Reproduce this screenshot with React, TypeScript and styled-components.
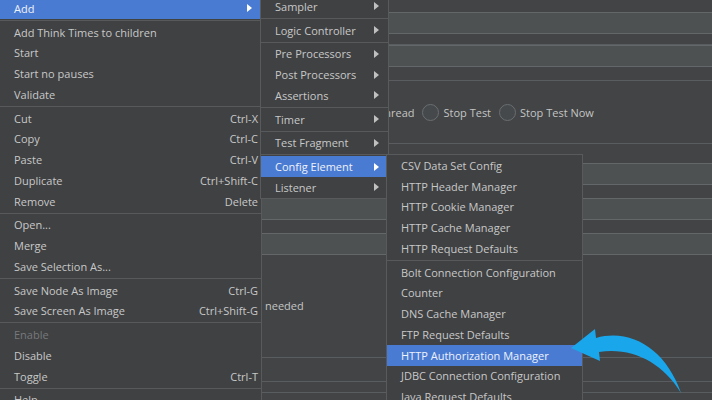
import React from 'react';
import styled, { createGlobalStyle } from 'styled-components';

type MenuEntry =
    | 'sep'
    | {
          label: string;
          shortcut?: string;
          sub?: boolean;
          active?: boolean;
          disabled?: boolean;
      };

const mainItems: MenuEntry[] = [
    { label: 'Add', sub: true, active: true },
    'sep',
    { label: 'Add Think Times to children' },
    { label: 'Start' },
    { label: 'Start no pauses' },
    { label: 'Validate' },
    'sep',
    { label: 'Cut', shortcut: 'Ctrl-X' },
    { label: 'Copy', shortcut: 'Ctrl-C' },
    { label: 'Paste', shortcut: 'Ctrl-V' },
    { label: 'Duplicate', shortcut: 'Ctrl+Shift-C' },
    { label: 'Remove', shortcut: 'Delete' },
    'sep',
    { label: 'Open...' },
    { label: 'Merge' },
    { label: 'Save Selection As...' },
    'sep',
    { label: 'Save Node As Image', shortcut: 'Ctrl-G' },
    { label: 'Save Screen As Image', shortcut: 'Ctrl+Shift-G' },
    'sep',
    { label: 'Enable', disabled: true },
    { label: 'Disable' },
    { label: 'Toggle', shortcut: 'Ctrl-T' },
    'sep',
    { label: 'Help' },
];

const addItems: MenuEntry[] = [
    { label: 'Sampler', sub: true },
    'sep',
    { label: 'Logic Controller', sub: true },
    'sep',
    { label: 'Pre Processors', sub: true },
    { label: 'Post Processors', sub: true },
    { label: 'Assertions', sub: true },
    'sep',
    { label: 'Timer', sub: true },
    'sep',
    { label: 'Test Fragment', sub: true },
    'sep',
    { label: 'Config Element', sub: true, active: true },
    { label: 'Listener', sub: true },
];

const configItems: MenuEntry[] = [
    { label: 'CSV Data Set Config' },
    { label: 'HTTP Header Manager' },
    { label: 'HTTP Cookie Manager' },
    { label: 'HTTP Cache Manager' },
    { label: 'HTTP Request Defaults' },
    'sep',
    { label: 'Bolt Connection Configuration' },
    { label: 'Counter' },
    { label: 'DNS Cache Manager' },
    { label: 'FTP Request Defaults' },
    { label: 'HTTP Authorization Manager', active: true },
    { label: 'JDBC Connection Configuration' },
    { label: 'Java Request Defaults' },
];

function Menu({
    items,
    top,
    left,
    width,
}: {
    items: MenuEntry[];
    top: number;
    left: number;
    width: number;
}) {
    return (
        <Popup $top={top} $left={left} $width={width}>
            {items.map((item, i) =>
                item === 'sep' ? (
                    <Separator key={i} />
                ) : (
                    <MenuRow
                        key={i}
                        $active={!!item.active}
                        $disabled={!!item.disabled}
                    >
                        <span>{item.label}</span>
                        {item.shortcut && <Shortcut>{item.shortcut}</Shortcut>}
                        {item.sub && <SubArrow $active={!!item.active} />}
                    </MenuRow>
                ),
            )}
        </Popup>
    );
}

export default function App() {
    return (
        <>
            <GlobalStyle />
            <Screen>
                <Backdrop>
                    <Band $h={12} />
                    <Field />
                    <Band $h={11} $line />
                    <Field />
                    <Band $h={14} $line />
                    <RadioRow>
                        <RadioItem>
                            <Radio />
                            Stop Thread
                        </RadioItem>
                        <RadioItem>
                            <Radio />
                            Stop Test
                        </RadioItem>
                        <RadioItem>
                            <Radio />
                            Stop Test Now
                        </RadioItem>
                    </RadioRow>
                    <Band $h={19} />
                    <Field />
                    <Band $h={13} />
                    <Field />
                    <Band $h={13} />
                    <Field />
                    <CheckRow>
                        <CheckLabel>needed</CheckLabel>
                    </CheckRow>
                    <Band $h={24} $line />
                    <Band $h={11} $line />
                    <Band $h={10} />
                </Backdrop>

                <Menu items={mainItems} top={-3} left={-1} width={263} />
                <Menu items={addItems} top={-5} left={260} width={129} />
                <Menu items={configItems} top={154} left={386} width={197} />

                <Pointer viewBox="0 0 712 400">
                    <path
                        d="M571 348 L595 329 L596 338 C632 328 666 350 681 393 C662 362 632 347 599 352 L600 361 Z"
                        fill="#1aa6ea"
                    />
                </Pointer>
            </Screen>
        </>
    );
}

const GlobalStyle = createGlobalStyle`
    body {
        margin: 0;
        background: #414345;
        font-family: 'Open Sans', 'Noto Sans', sans-serif;
    }
`;

const Screen = styled.div`
    position: relative;
    width: 712px;
    height: 400px;
    overflow: hidden;
    background: #424446;
    font-size: 11px;
    color: #c6c6c6;
`;

const Backdrop = styled.div`
    display: flex;
    flex-direction: column;
    width: 100%;
`;

const Band = styled.div<{ $h: number; $line?: boolean }>`
    height: ${({ $h }) => $h}px;
    border-bottom: ${({ $line }) => ($line ? '1px solid #5a5d5f' : 'none')};
    box-sizing: border-box;
`;

const Field = styled.div`
    height: 22px;
    box-sizing: border-box;
    background: #4d5152;
    border-top: 1px solid #63676a;
    border-bottom: 1px solid #63676a;
`;

const RadioRow = styled.div`
    height: 63px;
    display: flex;
    align-items: center;
    gap: 8px;
    padding-left: 331px;
    border-bottom: 1px solid #5a5d5f;
    box-sizing: border-box;
`;

const RadioItem = styled.label`
    display: flex;
    align-items: center;
    gap: 4px;
    font-size: 11px;
    color: #c4c4c4;
`;

const Radio = styled.span`
    width: 15px;
    height: 15px;
    border-radius: 50%;
    border: 1px solid #6b6e70;
    background: #46494b;
`;

const CheckRow = styled.div`
    height: 103px;
    display: flex;
    align-items: center;
    padding: 0 0 2px 265px;
    box-sizing: border-box;
    border-bottom: 1px solid #5a5d5f;
`;

const CheckLabel = styled.span`
    font-size: 11px;
    color: #c4c4c4;
`;

const Popup = styled.div<{ $top: number; $left: number; $width: number }>`
    position: absolute;
    top: ${({ $top }) => $top}px;
    left: ${({ $left }) => $left}px;
    width: ${({ $width }) => $width}px;
    box-sizing: border-box;
    background: #3f4143;
    border: 1px solid #585a5c;
    display: flex;
    flex-direction: column;
`;

const MenuRow = styled.div<{ $active: boolean; $disabled: boolean }>`
    height: 20.75px;
    display: flex;
    align-items: center;
    padding: 0 3px 0 14px;
    white-space: nowrap;
    font-size: 11px;
    background: ${({ $active }) => ($active ? '#4a7bd2' : 'transparent')};
    color: ${({ $active, $disabled }) =>
        $disabled ? '#77797b' : $active ? '#eef2fa' : '#c8c8c8'};
`;

const Shortcut = styled.span`
    margin-left: auto;
`;

const SubArrow = styled.span<{ $active: boolean }>`
    margin-left: auto;
    margin-right: 6px;
    width: 0;
    height: 0;
    border-top: 4px solid transparent;
    border-bottom: 4px solid transparent;
    border-left: 5px solid ${({ $active }) => ($active ? '#ffffff' : '#c0c0c0')};
`;

const Separator = styled.div`
    height: 3px;
    display: flex;
    align-items: center;

    &::after {
        content: '';
        flex: 1;
        height: 1px;
        background: #57595b;
    }
`;

const Pointer = styled.svg`
    position: absolute;
    inset: 0;
    width: 712px;
    height: 400px;
    pointer-events: none;
`;
